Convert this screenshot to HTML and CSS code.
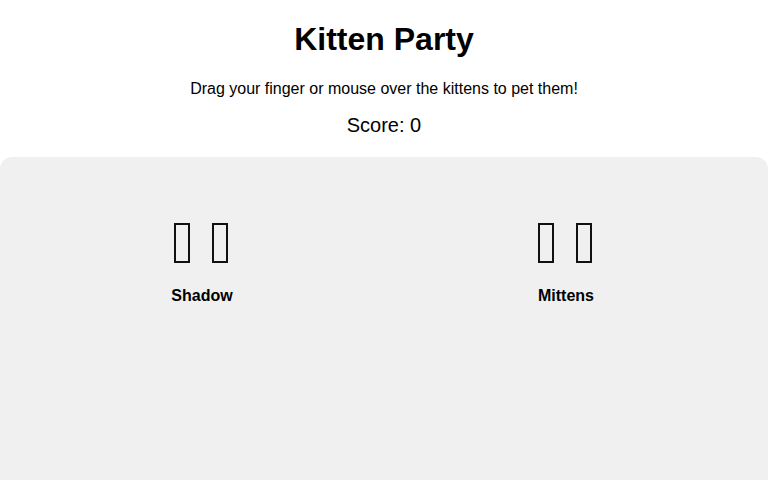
FILE: index.html
```html
<!DOCTYPE html>
<html lang="en">
<head>
  <meta charset="UTF-8">
  <meta name="viewport" content="width=device-width, initial-scale=1.0">
  <title>Kitten Party</title>
  <link rel="stylesheet" href="styles.css">
</head>
<body>
  <h1>Kitten Party</h1>
  <p class="intro">Drag your finger or mouse over the kittens to pet them!</p>
  <div class="score">Score: <span id="score">0</span></div>

  <!-- Play area with kittens (faces show as missing-glyph boxes) -->
  <div class="play-area">
    <div class="kitten">
      <div class="kitten-face" title="kitten">
        <span class="tofu"></span>
        <span class="tofu"></span>
      </div>
      <div class="kitten-name">Shadow</div>
    </div>
    <div class="kitten">
      <div class="kitten-face" title="kitten">
        <span class="tofu"></span>
        <span class="tofu"></span>
      </div>
      <div class="kitten-name">Mittens</div>
    </div>
  </div>
</body>
</html>
```

FILE: styles.css
```css
body {
  font-family: "Liberation Sans", Arial, sans-serif;
  margin: 0;
  padding: 0;
  text-align: center;
  background-color: #fff;
  color: #000;
}

h1 {
  font-size: 32px;
  margin: 0.67em 0;
}

.intro {
  font-size: 16px;
  margin: 16px 0;
}

.score {
  font-size: 20px;
}

.play-area {
  display: grid;
  grid-template-columns: 1fr 1fr;
  align-items: start;
  padding: 20px;
  margin-top: 20px;
  min-height: 340px;
  background-color: #f0f0f0;
  border-radius: 12px 12px 0 0;
}

.kitten {
  padding: 20px;
}

.kitten-face {
  display: flex;
  justify-content: center;
  gap: 22px;
  height: 40px;
  padding: 26px 3px 0 0;
}

/* missing emoji glyph box */
.tofu {
  width: 16px;
  height: 40px;
  border: 2px solid #111;
  box-sizing: border-box;
}

.kitten-name {
  font-weight: bold;
  margin-top: 24px;
}
```
